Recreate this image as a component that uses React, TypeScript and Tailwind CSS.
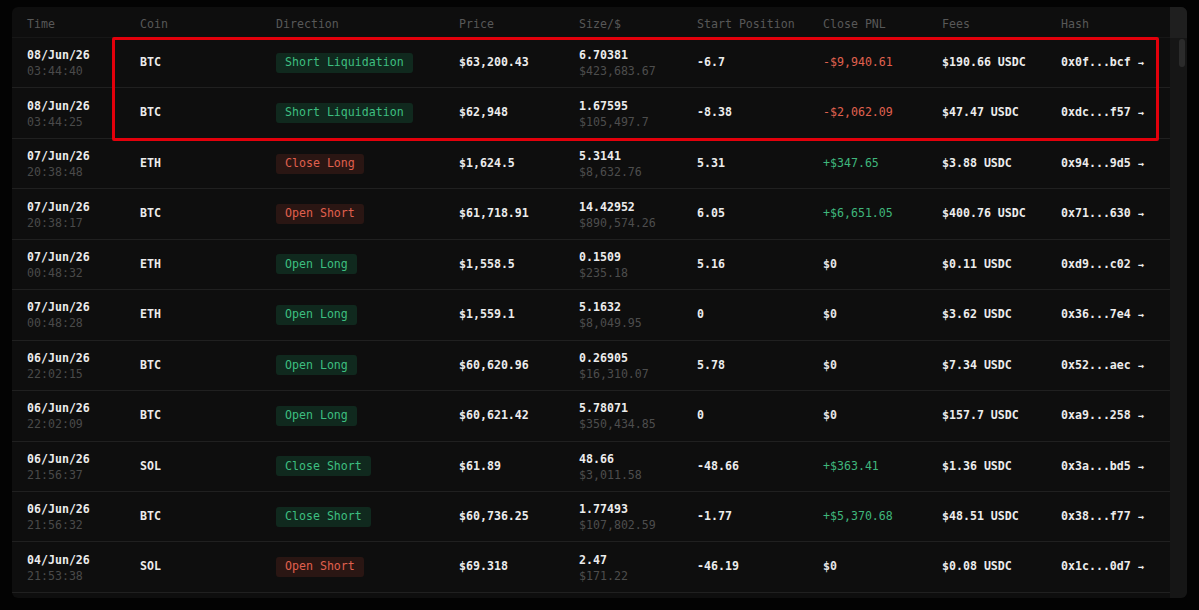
import React from "react";

type Tone = "green" | "red";

type Fill = {
  date: string;
  time: string;
  coin: string;
  dir: string;
  dirTone: Tone;
  price: string;
  size: string;
  usd: string;
  start: string;
  pnl: string;
  fees: string;
  hash: string;
};

const fills: Fill[] = [
  { date: "08/Jun/26", time: "03:44:40", coin: "BTC", dir: "Short Liquidation", dirTone: "green", price: "$63,200.43", size: "6.70381", usd: "$423,683.67", start: "-6.7", pnl: "-$9,940.61", fees: "$190.66 USDC", hash: "0x0f...bcf" },
  { date: "08/Jun/26", time: "03:44:25", coin: "BTC", dir: "Short Liquidation", dirTone: "green", price: "$62,948", size: "1.67595", usd: "$105,497.7", start: "-8.38", pnl: "-$2,062.09", fees: "$47.47 USDC", hash: "0xdc...f57" },
  { date: "07/Jun/26", time: "20:38:48", coin: "ETH", dir: "Close Long", dirTone: "red", price: "$1,624.5", size: "5.3141", usd: "$8,632.76", start: "5.31", pnl: "+$347.65", fees: "$3.88 USDC", hash: "0x94...9d5" },
  { date: "07/Jun/26", time: "20:38:17", coin: "BTC", dir: "Open Short", dirTone: "red", price: "$61,718.91", size: "14.42952", usd: "$890,574.26", start: "6.05", pnl: "+$6,651.05", fees: "$400.76 USDC", hash: "0x71...630" },
  { date: "07/Jun/26", time: "00:48:32", coin: "ETH", dir: "Open Long", dirTone: "green", price: "$1,558.5", size: "0.1509", usd: "$235.18", start: "5.16", pnl: "$0", fees: "$0.11 USDC", hash: "0xd9...c02" },
  { date: "07/Jun/26", time: "00:48:28", coin: "ETH", dir: "Open Long", dirTone: "green", price: "$1,559.1", size: "5.1632", usd: "$8,049.95", start: "0", pnl: "$0", fees: "$3.62 USDC", hash: "0x36...7e4" },
  { date: "06/Jun/26", time: "22:02:15", coin: "BTC", dir: "Open Long", dirTone: "green", price: "$60,620.96", size: "0.26905", usd: "$16,310.07", start: "5.78", pnl: "$0", fees: "$7.34 USDC", hash: "0x52...aec" },
  { date: "06/Jun/26", time: "22:02:09", coin: "BTC", dir: "Open Long", dirTone: "green", price: "$60,621.42", size: "5.78071", usd: "$350,434.85", start: "0", pnl: "$0", fees: "$157.7 USDC", hash: "0xa9...258" },
  { date: "06/Jun/26", time: "21:56:37", coin: "SOL", dir: "Close Short", dirTone: "green", price: "$61.89", size: "48.66", usd: "$3,011.58", start: "-48.66", pnl: "+$363.41", fees: "$1.36 USDC", hash: "0x3a...bd5" },
  { date: "06/Jun/26", time: "21:56:32", coin: "BTC", dir: "Close Short", dirTone: "green", price: "$60,736.25", size: "1.77493", usd: "$107,802.59", start: "-1.77", pnl: "+$5,370.68", fees: "$48.51 USDC", hash: "0x38...f77" },
  { date: "04/Jun/26", time: "21:53:38", coin: "SOL", dir: "Open Short", dirTone: "red", price: "$69.318", size: "2.47", usd: "$171.22", start: "-46.19", pnl: "$0", fees: "$0.08 USDC", hash: "0x1c...0d7" },
];

const cols = "grid grid-cols-[113px_136px_183px_120px_118px_126px_119px_119px_1fr] items-center pl-[15px]";

function pnlClass(pnl: string) {
  if (pnl.startsWith("-")) return "text-[#e0614f]";
  if (pnl.startsWith("+")) return "text-[#3fb67c]";
  return "text-[#e6e6e6] font-bold";
}

function Badge({ label, tone }: { label: string; tone: Tone }) {
  return (
    <span
      className={
        tone === "green"
          ? "inline-flex h-[20px] items-center rounded-[3px] bg-[#10291e] px-[9px] text-[#3dbf80]"
          : "inline-flex h-[20px] items-center rounded-[3px] bg-[#2a1613] px-[9px] text-[#e0604e]"
      }
    >
      {label}
    </span>
  );
}

export default function App() {
  return (
    <div
      className="min-h-screen bg-[#030303] pl-[12px] pr-[12px] pt-[7px] text-[11.6px]"
      style={{ fontFamily: '"DejaVu Sans Mono", "Liberation Mono", monospace' }}
    >
      <div className="relative flex h-[591px] w-[1175px] overflow-hidden rounded-[6px] bg-[#0e0e0e]">
        <div className="flex-1">
          <div className={`${cols} h-[31px] border-b border-[#171717] pt-[5px] text-[#585858]`}>
            <span>Time</span>
            <span>Coin</span>
            <span>Direction</span>
            <span>Price</span>
            <span>Size/$</span>
            <span>Start Position</span>
            <span>Close PNL</span>
            <span>Fees</span>
            <span>Hash</span>
          </div>

          {fills.map((f, i) => (
            <div key={i} className={`${cols} h-[50.45px] border-b border-[#202020]`}>
              <div className="flex flex-col pt-[1px] leading-[16px]">
                <span className="font-bold text-[#ececec]">{f.date}</span>
                <span className="text-[#4a4a4a]">{f.time}</span>
              </div>
              <span className="font-bold text-[#ececec]">{f.coin}</span>
              <div>
                <Badge label={f.dir} tone={f.dirTone} />
              </div>
              <span className="font-bold text-[#ececec]">{f.price}</span>
              <div className="flex flex-col pt-[1px] leading-[16px]">
                <span className="font-bold text-[#ececec]">{f.size}</span>
                <span className="text-[#4d4d4d]">{f.usd}</span>
              </div>
              <span className="font-bold text-[#ececec]">{f.start}</span>
              <span className={pnlClass(f.pnl)}>{f.pnl}</span>
              <span className="font-bold text-[#ececec]">{f.fees}</span>
              <span className="font-bold text-[#ececec]">
                {f.hash} <span className="text-[10px]">→</span>
              </span>
            </div>
          ))}
        </div>

        {/* scrollbar */}
        <div className="flex w-[17px] flex-col bg-[#161616]">
          <div className="h-[31px] bg-[#1f1f1f]" />
          <div className="ml-[9px] mt-[1px] h-[28px] w-[6px] rounded-[3px] bg-[#2b2b2b]" />
        </div>

        {/* annotation box */}
        <div className="pointer-events-none absolute left-[100px] top-[30px] h-[104px] w-[1047px] rounded-[2px] border-[3px] border-[#e3000b]" />
      </div>
    </div>
  );
}
